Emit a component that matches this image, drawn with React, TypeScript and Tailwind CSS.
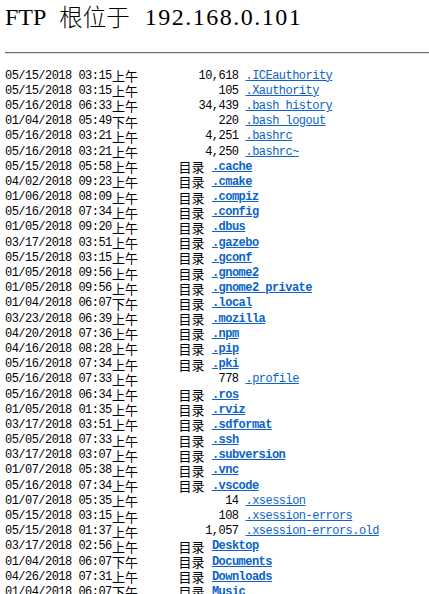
import React from 'react';

type Entry = { date: string; ampm: string; size?: string; name: string };

const entries: Entry[] = [
  { date: '05/15/2018 03:15', ampm: '上午', size: '10,618', name: '.ICEauthority' },
  { date: '05/15/2018 03:15', ampm: '上午', size: '105', name: '.Xauthority' },
  { date: '05/16/2018 06:33', ampm: '上午', size: '34,439', name: '.bash_history' },
  { date: '01/04/2018 05:49', ampm: '下午', size: '220', name: '.bash_logout' },
  { date: '05/16/2018 03:21', ampm: '上午', size: '4,251', name: '.bashrc' },
  { date: '05/16/2018 03:21', ampm: '上午', size: '4,250', name: '.bashrc~' },
  { date: '05/15/2018 05:58', ampm: '上午', name: '.cache' },
  { date: '04/02/2018 09:23', ampm: '上午', name: '.cmake' },
  { date: '01/06/2018 08:09', ampm: '上午', name: '.compiz' },
  { date: '05/16/2018 07:34', ampm: '上午', name: '.config' },
  { date: '01/05/2018 09:20', ampm: '上午', name: '.dbus' },
  { date: '03/17/2018 03:51', ampm: '上午', name: '.gazebo' },
  { date: '05/15/2018 03:15', ampm: '上午', name: '.gconf' },
  { date: '01/05/2018 09:56', ampm: '上午', name: '.gnome2' },
  { date: '01/05/2018 09:56', ampm: '上午', name: '.gnome2_private' },
  { date: '01/04/2018 06:07', ampm: '下午', name: '.local' },
  { date: '03/23/2018 06:39', ampm: '上午', name: '.mozilla' },
  { date: '04/20/2018 07:36', ampm: '上午', name: '.npm' },
  { date: '04/16/2018 08:28', ampm: '上午', name: '.pip' },
  { date: '05/16/2018 07:34', ampm: '上午', name: '.pki' },
  { date: '05/16/2018 07:33', ampm: '上午', size: '778', name: '.profile' },
  { date: '05/16/2018 06:34', ampm: '上午', name: '.ros' },
  { date: '01/05/2018 01:35', ampm: '上午', name: '.rviz' },
  { date: '03/17/2018 03:51', ampm: '上午', name: '.sdformat' },
  { date: '05/05/2018 07:33', ampm: '上午', name: '.ssh' },
  { date: '03/17/2018 03:07', ampm: '上午', name: '.subversion' },
  { date: '01/07/2018 05:38', ampm: '上午', name: '.vnc' },
  { date: '05/16/2018 07:34', ampm: '上午', name: '.vscode' },
  { date: '01/07/2018 05:35', ampm: '上午', size: '14', name: '.xsession' },
  { date: '05/15/2018 03:15', ampm: '上午', size: '108', name: '.xsession-errors' },
  { date: '05/15/2018 01:37', ampm: '上午', size: '1,057', name: '.xsession-errors.old' },
  { date: '03/17/2018 02:56', ampm: '上午', name: 'Desktop' },
  { date: '01/04/2018 06:07', ampm: '下午', name: 'Documents' },
  { date: '04/26/2018 07:31', ampm: '上午', name: 'Downloads' },
  { date: '01/04/2018 06:07', ampm: '下午', name: 'Music' },
];

// SimSun-like: half-width latin at ~6.67px advance, full-width CJK at ~13.3px
const mono = "font-['Liberation_Mono',monospace] text-[12px] tracking-[-0.53px] leading-none";
const cjk = "font-['Noto_Sans_CJK_SC',sans-serif] text-[13px] leading-none";

const Row = ({ entry }: { entry: Entry }) => (
  <div className="flex h-[15.2px] items-center whitespace-pre text-black">
    <span className={`${mono} w-[107px]`}>{entry.date}</span>
    <span className={`${cjk} w-[26.5px]`}>{entry.ampm}</span>
    {entry.size ? (
      <>
        <span className={`${mono} w-[100px] text-right`}>{entry.size}</span>
        <a href="#" className={`${mono} ml-[7px] text-[#0b63c9] underline`}>
          {entry.name}
        </a>
      </>
    ) : (
      <>
        <span className={`${cjk} ml-[40px] w-[26.7px]`}>目录</span>
        <a href="#" className={`${mono} ml-[6.7px] font-bold text-[#0b63c9] underline`}>
          {entry.name}
        </a>
      </>
    )}
  </div>
);

export default function App() {
  return (
    <div className="min-h-screen overflow-hidden bg-white pl-[5px]">
      <h1 className="flex h-[34px] items-center text-[24px] font-normal text-black">
        <span className="font-['Liberation_Serif',serif]">FTP</span>
        <span className="ml-[13px] font-['Noto_Sans_CJK_SC',sans-serif] text-[23.5px] font-light leading-none">
          根位于
        </span>
        <span className="ml-[15px] font-['Liberation_Serif',serif] tracking-[1.5px]">192.168.0.101</span>
      </h1>
      <div className="mt-[18px] h-[2px] border-t border-[#6f6f6f] bg-[#dedede]" />
      <div className="mt-[14px]">
        {entries.map((entry, i) => (
          <Row key={i} entry={entry} />
        ))}
      </div>
    </div>
  );
}
